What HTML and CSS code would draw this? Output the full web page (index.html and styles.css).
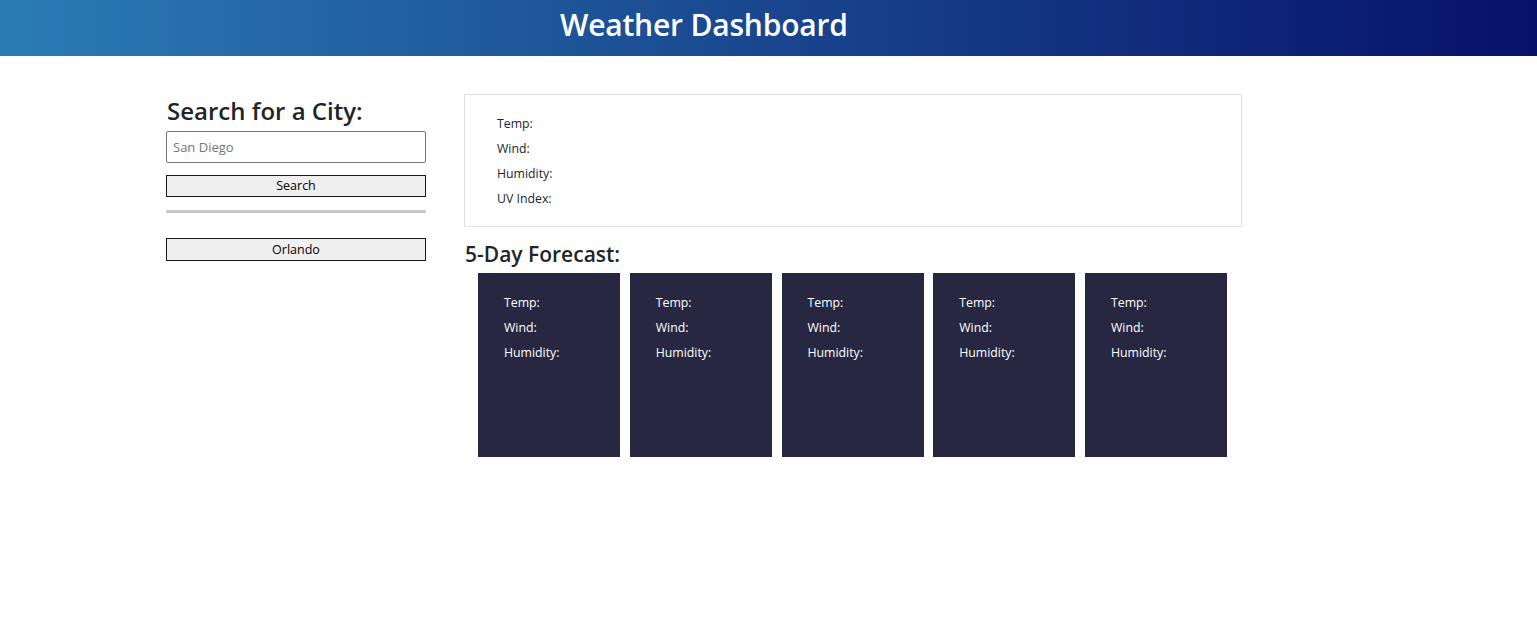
FILE: index.html
```html
<!DOCTYPE html>
<html>
<head>
<meta charset="utf-8">
<link rel="stylesheet" href="styles.css">
</head>
<body>
<header class="topbar">
  <h1 class="title">Weather Dashboard</h1>
</header>
<main class="layout">
  <aside class="sidebar">
    <h2 class="side-title">Search for a City:</h2>
    <input class="city-input" type="text" placeholder="San Diego">
    <button class="btn search-btn">Search</button>
    <div class="divider"></div>
    <button class="btn history-btn">Orlando</button>
  </aside>
  <section class="content">
    <div class="current">
      <p class="stat">Temp:</p>
      <p class="stat">Wind:</p>
      <p class="stat">Humidity:</p>
      <p class="stat">UV Index:</p>
    </div>
    <h3 class="forecast-title">5-Day Forecast:</h3>
    <div class="cards">
      <div class="card"><p class="stat">Temp:</p><p class="stat">Wind:</p><p class="stat">Humidity:</p></div>
      <div class="card"><p class="stat">Temp:</p><p class="stat">Wind:</p><p class="stat">Humidity:</p></div>
      <div class="card"><p class="stat">Temp:</p><p class="stat">Wind:</p><p class="stat">Humidity:</p></div>
      <div class="card"><p class="stat">Temp:</p><p class="stat">Wind:</p><p class="stat">Humidity:</p></div>
      <div class="card"><p class="stat">Temp:</p><p class="stat">Wind:</p><p class="stat">Humidity:</p></div>
    </div>
  </section>
</main>
</body>
</html>
```

FILE: styles.css
```css
* { box-sizing: border-box; }
body {
  margin: 0;
  font-family: "Open Sans", "Noto Sans", sans-serif;
  color: #212529;
  background: #fff;
}
.topbar {
  height: 56px;
  background: linear-gradient(to right, #2b7cb5, #071168);
  display: flex;
  align-items: center;
  padding-left: 560px;
  padding-bottom: 7px;
}
.title {
  margin: 0;
  color: #fff;
  font-size: 30px;
  font-weight: 600;
  letter-spacing: -0.2px;
}
.layout {
  display: flex;
  gap: 38px;
  padding: 38px 0 0 166px;
}
.sidebar {
  width: 260px;
  display: flex;
  flex-direction: column;
  padding-top: 1px;
}
.side-title {
  margin: 0 0 4px 1px;
  font-size: 24px;
  font-weight: 600;
  line-height: 32px;
  letter-spacing: 0;
}
.city-input {
  height: 32px;
  border: 1px solid #767676;
  border-radius: 2px;
  padding: 0 6px;
  font-family: inherit;
  font-size: 13px;
  color: #212529;
}
.city-input::placeholder { color: #757575; }
.btn {
  height: 22px;
  padding: 0;
  background: #efefef;
  border: 1px solid #1a1a1a;
  border-radius: 0;
  font-family: inherit;
  font-size: 12.5px;
  color: #000;
  line-height: 20px;
}
.search-btn { margin-top: 12px; }
.divider {
  height: 3px;
  background: #c8c8c8;
  margin-top: 13px;
}
.history-btn { margin-top: 25px; height: 23px; }
.content {
  width: 778px;
}
.current {
  border: 1px solid #dee2e6;
  height: 133px;
  padding: 16px 32px 0;
}
.stat {
  margin: 0;
  font-size: 12.3px;
  line-height: 25px;
}
.forecast-title {
  margin: 12px 0 4px 1px;
  font-size: 21px;
  font-weight: 600;
  line-height: 30px;
  letter-spacing: 0;
}
.cards {
  display: flex;
  gap: 9.75px;
  padding-left: 14px;
}
.card {
  width: 142px;
  height: 184px;
  background: #272742;
  color: #fff;
  padding: 17px 26px 0;
}
.card .stat { color: #fff; }
```
